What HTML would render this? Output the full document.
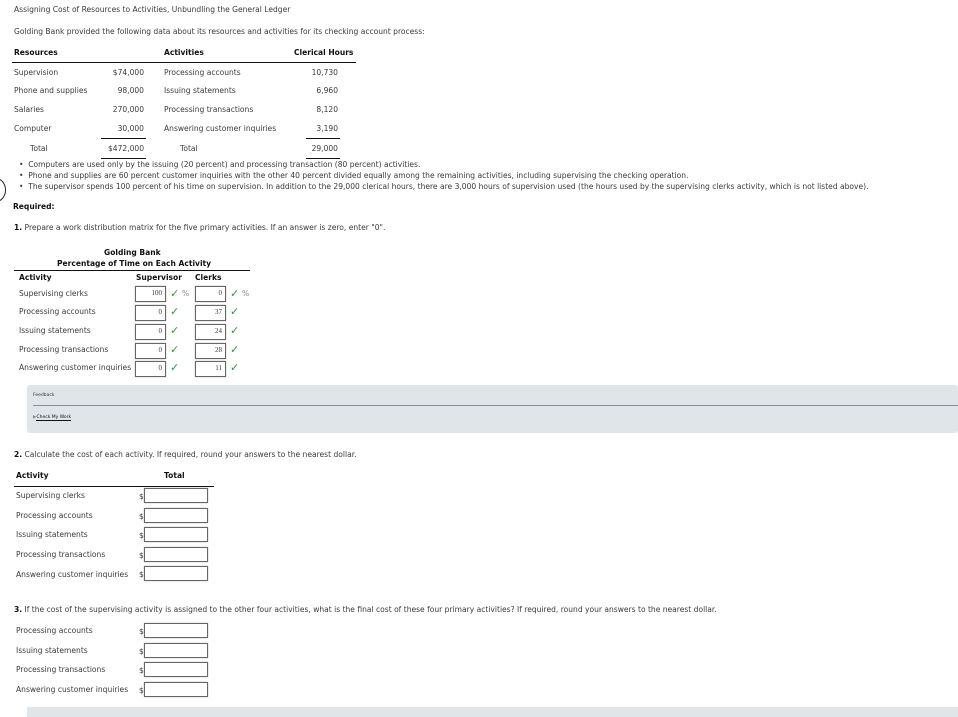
<!DOCTYPE html>
<html><head><meta charset="utf-8"><style>
body{margin:0;width:958px;height:711px;background:#fff;position:relative;overflow:hidden;font-family:"DejaVu Sans","Liberation Sans",sans-serif;font-size:7.55px;color:#3a3a3a}
.a{position:absolute;white-space:nowrap;line-height:10px}
b{color:#111;font-weight:bold}
.ln{position:absolute;height:1px;background:#111}
.in{position:absolute;border:1px solid #666;background:#fff;box-shadow:0 0 1px #999;font-family:"Liberation Serif",serif;font-size:7px;text-align:right;line-height:13px;padding-right:3px;box-sizing:border-box;height:16px}
.ck{position:absolute;color:#2a9d2a;font-size:11px;font-weight:bold;line-height:10px}
.r{text-align:right}
</style></head><body>
<div class="a" style="left:14px;top:5px">Assigning Cost of Resources to Activities, Unbundling the General Ledger</div>
<div class="a" style="left:14px;top:27px">Golding Bank provided the following data about its resources and activities for its checking account process:</div>
<div class="a" style="left:14px;top:48px"><b>Resources</b></div>
<div class="a" style="left:164px;top:48px"><b>Activities</b></div>
<div class="a" style="left:294px;top:48px"><b>Clerical Hours</b></div>
<div class="ln" style="left:12px;top:62px;width:344px"></div>
<div class="a" style="left:14px;top:68px">Supervision</div><div class="a r" style="left:96px;top:68px;width:48px">$74,000</div><div class="a" style="left:164px;top:68px">Processing accounts</div><div class="a r" style="left:300px;top:68px;width:38px">10,730</div>
<div class="a" style="left:14px;top:86px">Phone and supplies</div><div class="a r" style="left:96px;top:86px;width:48px">98,000</div><div class="a" style="left:164px;top:86px">Issuing statements</div><div class="a r" style="left:300px;top:86px;width:38px">6,960</div>
<div class="a" style="left:14px;top:105px">Salaries</div><div class="a r" style="left:96px;top:105px;width:48px">270,000</div><div class="a" style="left:164px;top:105px">Processing transactions</div><div class="a r" style="left:300px;top:105px;width:38px">8,120</div>
<div class="a" style="left:14px;top:124px">Computer</div><div class="a r" style="left:96px;top:124px;width:48px">30,000</div><div class="a" style="left:164px;top:124px">Answering customer inquiries</div><div class="a r" style="left:300px;top:124px;width:38px">3,190</div>
<div class="ln" style="left:101px;top:138px;width:45px"></div><div class="ln" style="left:306px;top:138px;width:34px"></div>
<div class="a" style="left:30px;top:144px">Total</div><div class="a r" style="left:96px;top:144px;width:48px">$472,000</div><div class="a" style="left:180px;top:144px">Total</div><div class="a r" style="left:300px;top:144px;width:38px">29,000</div>
<div class="ln" style="left:101px;top:158px;width:45px"></div><div class="ln" style="left:306px;top:158px;width:34px"></div>
<div class="a" style="left:19px;top:160px">•&nbsp; Computers are used only by the issuing (20 percent) and processing transaction (80 percent) activities.</div>
<div class="a" style="left:19px;top:171px">•&nbsp; Phone and supplies are 60 percent customer inquiries with the other 40 percent divided equally among the remaining activities, including supervising the checking operation.</div>
<div class="a" style="left:19px;top:182px">•&nbsp; The supervisor spends 100 percent of his time on supervision. In addition to the 29,000 clerical hours, there are 3,000 hours of supervision used (the hours used by the supervising clerks activity, which is not listed above).</div>
<div style="position:absolute;left:-14px;top:178px;width:18px;height:22px;border:1px solid #222;border-radius:50%"></div>
<div class="a" style="left:13px;top:202px"><b>Required:</b></div>
<div class="a" style="left:14px;top:223px"><b>1.</b> Prepare a work distribution matrix for the five primary activities. If an answer is zero, enter "0".</div>
<div class="a" style="left:104px;top:248px"><b>Golding Bank</b></div>
<div class="a" style="left:57px;top:259px"><b>Percentage of Time on Each Activity</b></div>
<div class="ln" style="left:14px;top:270px;width:236px"></div>
<div class="a" style="left:19px;top:273px"><b>Activity</b></div><div class="a" style="left:136px;top:273px"><b>Supervisor</b></div><div class="a" style="left:195px;top:273px"><b>Clerks</b></div>
<div class="a" style="left:19px;top:289px">Supervising clerks</div>
<div class="a" style="left:19px;top:307px">Processing accounts</div>
<div class="a" style="left:19px;top:326px">Issuing statements</div>
<div class="a" style="left:19px;top:345px">Processing transactions</div>
<div class="a" style="left:19px;top:363px">Answering customer inquiries</div>
<div class="in" style="left:135px;top:286px;width:31px">100</div><div class="in" style="left:195px;top:286px;width:31px">0</div>
<div class="in" style="left:135px;top:305px;width:31px">0</div><div class="in" style="left:195px;top:305px;width:31px">37</div>
<div class="in" style="left:135px;top:324px;width:31px">0</div><div class="in" style="left:195px;top:324px;width:31px">24</div>
<div class="in" style="left:135px;top:343px;width:31px">0</div><div class="in" style="left:195px;top:343px;width:31px">28</div>
<div class="in" style="left:135px;top:361px;width:31px">0</div><div class="in" style="left:195px;top:361px;width:31px">11</div>
<div class="ck" style="left:170px;top:289px">✓</div><div class="a" style="left:182px;top:289px;color:#888">%</div><div class="ck" style="left:230px;top:289px">✓</div><div class="a" style="left:242px;top:289px;color:#888">%</div>
<div class="ck" style="left:170px;top:307px">✓</div><div class="ck" style="left:230px;top:307px">✓</div>
<div class="ck" style="left:170px;top:326px">✓</div><div class="ck" style="left:230px;top:326px">✓</div>
<div class="ck" style="left:170px;top:345px">✓</div><div class="ck" style="left:230px;top:345px">✓</div>
<div class="ck" style="left:170px;top:363px">✓</div><div class="ck" style="left:230px;top:363px">✓</div>
<div style="position:absolute;left:27px;top:385px;width:931px;height:48px;background:#dfe5e8;border-radius:3px"></div>
<div class="a" style="left:33px;top:391px;font-size:4.5px;color:#333">Feedback</div>
<div style="position:absolute;left:33px;top:405px;width:925px;height:1px;background:#8a9095"></div>
<div class="a" style="left:33px;top:413px;font-size:4.5px;color:#111"><span style="color:#888">▶</span><span style="border-bottom:1px solid #111">Check My Work</span></div>
<div class="a" style="left:14px;top:450px"><b>2.</b> Calculate the cost of each activity. If required, round your answers to the nearest dollar.</div>
<div class="a" style="left:16px;top:471px"><b>Activity</b></div><div class="a" style="left:164px;top:471px"><b>Total</b></div>
<div class="ln" style="left:14px;top:486px;width:200px"></div>
<div class="a" style="left:16px;top:491px">Supervising clerks</div>
<div class="a" style="left:16px;top:511px">Processing accounts</div>
<div class="a" style="left:16px;top:530px">Issuing statements</div>
<div class="a" style="left:16px;top:550px">Processing transactions</div>
<div class="a" style="left:16px;top:570px">Answering customer inquiries</div>
<div class="a" style="left:139px;top:492px">$</div><div class="in" style="left:144px;top:488px;width:64px;height:15px"></div>
<div class="a" style="left:139px;top:512px">$</div><div class="in" style="left:144px;top:508px;width:64px;height:15px"></div>
<div class="a" style="left:139px;top:531px">$</div><div class="in" style="left:144px;top:527px;width:64px;height:15px"></div>
<div class="a" style="left:139px;top:551px">$</div><div class="in" style="left:144px;top:547px;width:64px;height:15px"></div>
<div class="a" style="left:139px;top:570px">$</div><div class="in" style="left:144px;top:566px;width:64px;height:15px"></div>
<div class="a" style="left:14px;top:605px"><b>3.</b> If the cost of the supervising activity is assigned to the other four activities, what is the final cost of these four primary activities? If required, round your answers to the nearest dollar.</div>
<div class="a" style="left:16px;top:626px">Processing accounts</div>
<div class="a" style="left:16px;top:646px">Issuing statements</div>
<div class="a" style="left:16px;top:665px">Processing transactions</div>
<div class="a" style="left:16px;top:685px">Answering customer inquiries</div>
<div class="a" style="left:139px;top:627px">$</div><div class="in" style="left:144px;top:623px;width:64px;height:15px"></div>
<div class="a" style="left:139px;top:647px">$</div><div class="in" style="left:144px;top:643px;width:64px;height:15px"></div>
<div class="a" style="left:139px;top:666px">$</div><div class="in" style="left:144px;top:662px;width:64px;height:15px"></div>
<div class="a" style="left:139px;top:686px">$</div><div class="in" style="left:144px;top:682px;width:64px;height:15px"></div>
<div style="position:absolute;left:27px;top:707px;width:931px;height:10px;background:#dfe5e8"></div>
</body></html>
